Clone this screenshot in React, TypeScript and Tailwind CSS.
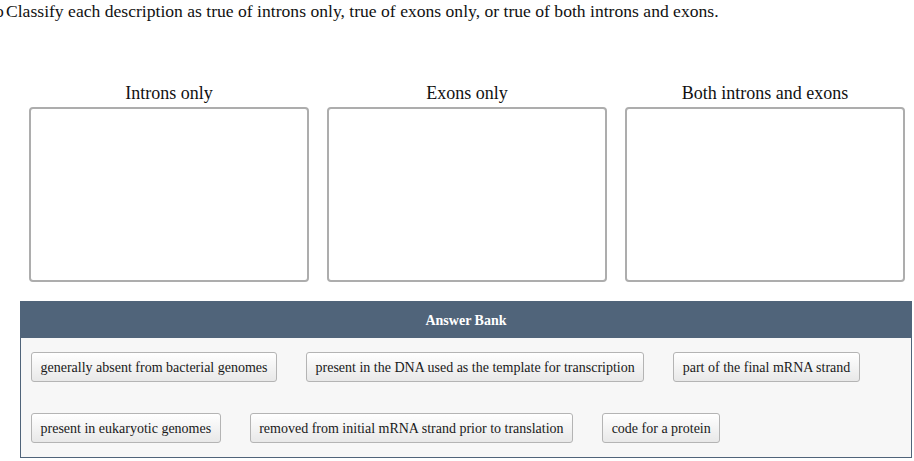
const columns = ["Introns only", "Exons only", "Both introns and exons"];

const answers = [
  [
    "generally absent from bacterial genomes",
    "present in the DNA used as the template for transcription",
    "part of the final mRNA strand",
  ],
  [
    "present in eukaryotic genomes",
    "removed from initial mRNA strand prior to translation",
    "code for a protein",
  ],
];

const serif = "font-['Liberation_Serif','Times_New_Roman',serif]";

const DropColumn = ({ label }: { label: string }) => {
  return (
    <div className="flex flex-col items-center w-[280px]">
      <div className={`${serif} text-[18px] leading-[21px] text-[#111] mb-[3px]`}>{label}</div>
      <div className="w-full h-[175px] border-2 border-[#adadad] rounded-[4px] bg-white"></div>
    </div>
  );
};

const Chip = ({ text }: { text: string }) => {
  return (
    <div
      className={`${serif} h-[30px] px-[8.5px] flex items-center border border-[#b4b4b4] rounded-[3px] bg-gradient-to-b from-white to-[#e8e8e8] text-[14px] text-[#1a1a1a] whitespace-nowrap`}
    >
      {text}
    </div>
  );
};

export default function App() {
  return (
    <div className={`${serif} w-[914px] h-[461px] bg-white overflow-hidden`}>
      <div className={`${serif} pt-[1px] pl-[6px] text-[17.6px] leading-[21px] text-[#111] relative`}>
        <span className="absolute left-[-5px] top-[1px]">o</span>
        Classify each description as true of introns only, true of exons only, or true of both introns and exons.
      </div>

      <div className="flex gap-[18px] pl-[29px] mt-[61px]">
        {columns.map((c) => (
          <DropColumn key={c} label={c} />
        ))}
      </div>

      <div className="ml-[20px] mt-[19px] w-[892px] border border-[#50647a]">
        <div className="h-[36px] bg-[#50647a] flex items-center justify-center text-white font-bold text-[14px]">
          Answer Bank
        </div>
        <div className="bg-[#f7f7f7] pl-[10px] pt-[14px] pb-[14px] flex flex-col gap-[31px]">
          {answers.map((row, i) => (
            <div key={i} className="flex gap-[29px]">
              {row.map((a) => (
                <Chip key={a} text={a} />
              ))}
            </div>
          ))}
        </div>
      </div>
    </div>
  );
}
